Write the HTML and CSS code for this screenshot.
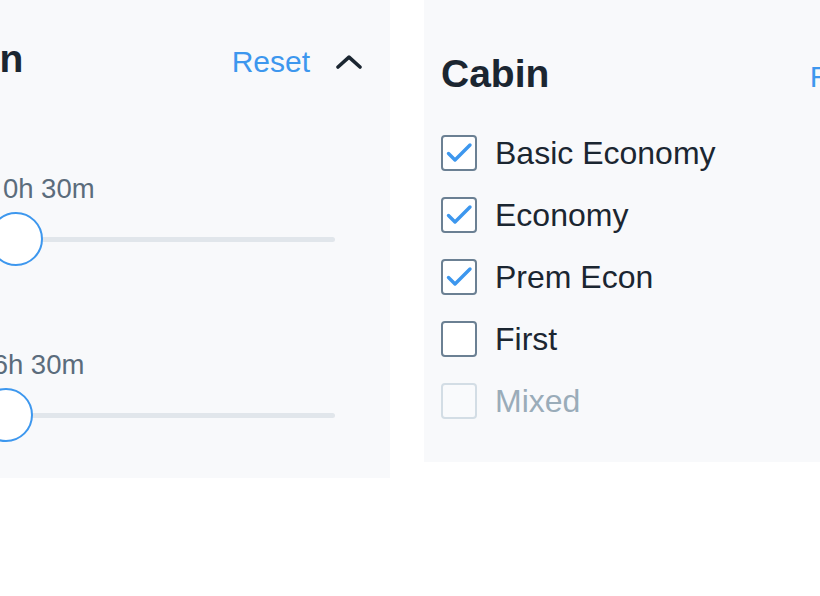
FILE: index.html
```html
<!DOCTYPE html>
<html lang="en">
<head>
<meta charset="utf-8">
<title>Filters</title>
<link rel="stylesheet" href="styles.css">
</head>
<body>
<main class="filters">
  <section class="panel panel--duration">
    <header class="panel-head">
      <h2 class="panel-title">Duration</h2>
      <a class="reset" href="#">Reset</a>
      <svg class="chevron" width="26" height="14" viewBox="0 0 26 14" aria-hidden="true"><polyline points="2,12 13,2.2 24,12" fill="none" stroke="#1b2631" stroke-width="3.6" stroke-linecap="round" stroke-linejoin="round"/></svg>
    </header>
    <div class="sliders">
      <div class="slider" style="--v:0.284">
        <div class="slider-label">0h 30m</div>
        <div class="slider-rail">
          <div class="slider-track"></div>
          <div class="slider-thumb"></div>
        </div>
      </div>
      <div class="slider" style="--v:0.261">
        <div class="slider-label">6h 30m</div>
        <div class="slider-rail">
          <div class="slider-track"></div>
          <div class="slider-thumb"></div>
        </div>
      </div>
    </div>
  </section>

  <section class="panel panel--cabin">
    <header class="panel-head">
      <h2 class="panel-title">Cabin</h2>
      <a class="reset" href="#">Reset</a>
      <svg class="chevron" width="26" height="14" viewBox="0 0 26 14" aria-hidden="true"><polyline points="2,12 13,2.2 24,12" fill="none" stroke="#1b2631" stroke-width="3.6" stroke-linecap="round" stroke-linejoin="round"/></svg>
    </header>
    <ul class="options">
      <li class="option">
        <span class="box box--checked"><svg width="36" height="36" viewBox="0 0 36 36"><polyline points="7.5,18.5 14,25 29,10" fill="none" stroke="#3d97ee" stroke-width="3.4" stroke-linecap="round" stroke-linejoin="round"/></svg></span>
        <span class="option-text">Basic Economy</span>
      </li>
      <li class="option">
        <span class="box box--checked"><svg width="36" height="36" viewBox="0 0 36 36"><polyline points="7.5,18.5 14,25 29,10" fill="none" stroke="#3d97ee" stroke-width="3.4" stroke-linecap="round" stroke-linejoin="round"/></svg></span>
        <span class="option-text">Economy</span>
      </li>
      <li class="option">
        <span class="box box--checked"><svg width="36" height="36" viewBox="0 0 36 36"><polyline points="7.5,18.5 14,25 29,10" fill="none" stroke="#3d97ee" stroke-width="3.4" stroke-linecap="round" stroke-linejoin="round"/></svg></span>
        <span class="option-text">Prem Econ</span>
      </li>
      <li class="option">
        <span class="box"></span>
        <span class="option-text">First</span>
      </li>
      <li class="option option--disabled">
        <span class="box"></span>
        <span class="option-text">Mixed</span>
      </li>
    </ul>
  </section>
</main>
</body>
</html>
```

FILE: styles.css
```css
* { box-sizing: border-box; }

html, body {
  margin: 0;
  padding: 0;
  background: #ffffff;
  overflow: hidden;
}

body {
  width: 820px;
  height: 596px;
  font-family: "Liberation Sans", Arial, sans-serif;
  color: #1b2631;
}

.filters {
  display: flex;
  align-items: flex-start;
  gap: 34px;
}

.panel {
  flex: none;
  width: 544px;
  background: #f8f9fb;
}

.panel--duration {
  margin-left: -154px;
  padding: 37px 28px 36px 17px;
}

.panel--cabin {
  padding: 52px 28px 43px 17px;
}

.panel-head {
  display: flex;
  align-items: flex-start;
  height: 44px;
}

.panel-title {
  margin: 0;
  font-size: 39px;
  line-height: 44px;
  font-weight: 700;
  color: #1b2631;
}

.reset {
  margin-left: auto;
  margin-top: 5px;
  font-size: 30px;
  line-height: 39px;
  color: #3d97ee;
  text-decoration: none;
}

.chevron {
  flex: none;
  margin-left: 26px;
  margin-top: 18px;
  display: block;
}

/* sliders */
.sliders {
  margin-top: 92px;
  display: flex;
  flex-direction: column;
  gap: 83px;
}

.slider-label {
  font-size: 27.5px;
  line-height: 32px;
  color: #5b6c7c;
  margin-bottom: 7px;
  padding-left: calc(var(--v) * (100% - 54px) + 13.5px);
  white-space: nowrap;
}

.slider-rail {
  position: relative;
  height: 54px;
  display: flex;
  align-items: center;
  padding: 0 27px;
}

.slider-track {
  flex: 1;
  height: 5px;
  border-radius: 3px;
  background: #e1e6eb;
}

.slider-thumb {
  position: absolute;
  top: 0;
  left: calc(var(--v) * (100% - 54px));
  width: 54px;
  height: 54px;
  border-radius: 50%;
  background: #ffffff;
  border: 2px solid #3d97ee;
}

/* checkbox list */
.options {
  list-style: none;
  margin: 39px 0 0;
  padding: 0;
  display: flex;
  flex-direction: column;
  gap: 26px;
}

.option {
  display: flex;
  align-items: center;
  height: 36px;
  gap: 18px;
}

.box {
  flex: none;
  width: 36px;
  height: 36px;
  border: 2px solid #6b8093;
  border-radius: 4px;
  background: #ffffff;
  position: relative;
}

.box svg {
  position: absolute;
  left: -2px;
  top: -2px;
  display: block;
}

.option-text {
  font-size: 32px;
  line-height: 38px;
  color: #1b2631;
  white-space: nowrap;
}

.option--disabled .box {
  border-color: #d3dde5;
  background: #f9fafc;
}

.option--disabled .option-text {
  color: #9aacb9;
}
```
